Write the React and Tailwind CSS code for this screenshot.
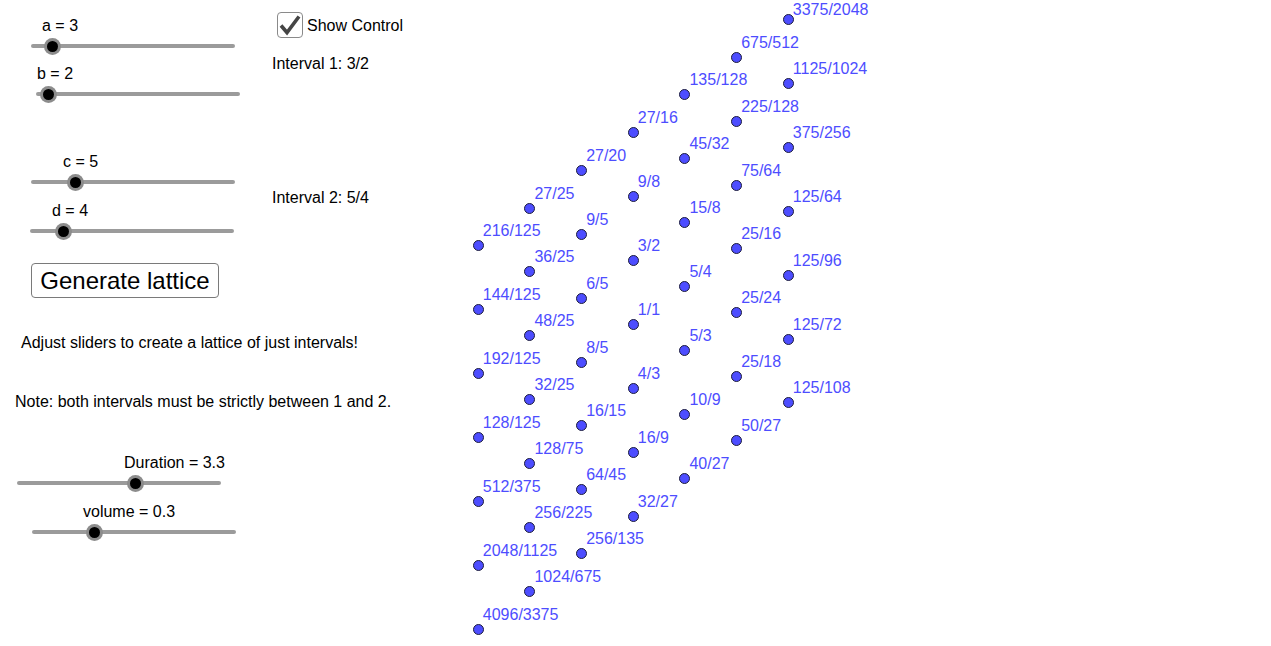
import React from "react";

// lattice columns go from i=-3 (left) to i=3 (right), rows j=-3 (top) to j=3
const columns = [
  ["216/125", "144/125", "192/125", "128/125", "512/375", "2048/1125", "4096/3375"],
  ["27/25", "36/25", "48/25", "32/25", "128/75", "256/225", "1024/675"],
  ["27/20", "9/5", "6/5", "8/5", "16/15", "64/45", "256/135"],
  ["27/16", "9/8", "3/2", "1/1", "4/3", "16/9", "32/27"],
  ["135/128", "45/32", "15/8", "5/4", "5/3", "10/9", "40/27"],
  ["675/512", "225/128", "75/64", "25/16", "25/24", "25/18", "50/27"],
  ["3375/2048", "1125/1024", "375/256", "125/64", "125/96", "125/72", "125/108"],
];

const CANVAS_LEFT = 450;

function Slider({ label, labelLeft, trackLeft, knob }) {
  return (
    <div className="flex flex-col">
      <div className="h-[18px] leading-[20px] whitespace-nowrap" style={{ marginLeft: labelLeft }}>
        {label}
      </div>
      <div className="relative mt-[4px] h-[16px] w-[204px]" style={{ marginLeft: trackLeft }}>
        <div className="absolute left-0 right-0 top-[6px] h-[4px] rounded-full bg-[#9b9b9b]" />
        <div
          className="absolute top-0 flex h-[17px] w-[17px] items-center justify-center rounded-full bg-[#8c8c8c]"
          style={{ left: knob - trackLeft - 8.5 }}
        >
          <div className="h-[11px] w-[11px] rounded-full bg-black" />
        </div>
      </div>
    </div>
  );
}

function CheckBox() {
  return (
    <div className="flex h-[26px] w-[26px] items-center justify-center rounded-[4px] border border-[#8a8a8a] bg-white">
      <svg width="24" height="24" viewBox="0 0 24 24">
        <path d="M3 12.5 L9 19.5 L21 3.5" fill="none" stroke="#454545" strokeWidth="3.6" />
      </svg>
    </div>
  );
}

function Lattice() {
  const nodes = [];
  columns.forEach((col, ci) => {
    const i = ci - 3;
    col.forEach((name, ri) => {
      const j = ri - 3;
      const x = 633.3 + 51.67 * i - CANVAS_LEFT;
      const y = 324.3 - 37.7 * i + 63.9 * j;
      nodes.push({ name, x, y });
    });
  });
  return (
    <div className="relative h-[646px] flex-1">
      {nodes.map((n) => (
        <React.Fragment key={n.name}>
          <div
            className="absolute h-[11px] w-[11px] rounded-full border border-[#1c1c3c] bg-[#4d4dff]"
            style={{ left: n.x - 5.5, top: n.y - 5.5 }}
          />
          <div
            className="absolute whitespace-nowrap text-[16px] leading-[18px] text-[#4d4dff]"
            style={{ left: n.x + 4.5, top: Math.max(1, n.y - 23.5) }}
          >
            {n.name}
          </div>
        </React.Fragment>
      ))}
    </div>
  );
}

export default function App() {
  return (
    <div className="flex h-[646px] w-[1271px] overflow-hidden bg-white font-['Liberation_Sans',Arial,sans-serif] text-[16px] text-black">
      <div className="flex w-[272px] shrink-0 flex-col">
        <div className="mt-[16px]">
          <Slider label="a = 3" labelLeft={42} trackLeft={31} knob={52.5} />
        </div>
        <div className="mt-[10px]">
          <Slider label="b = 2" labelLeft={37} trackLeft={36} knob={48} />
        </div>
        <div className="mt-[50px]">
          <Slider label="c = 5" labelLeft={63} trackLeft={31} knob={75} />
        </div>
        <div className="mt-[11px]">
          <Slider label="d = 4" labelLeft={52} trackLeft={30} knob={63} />
        </div>
        <button className="ml-[31px] mt-[24px] h-[35px] w-[188px] rounded-[4px] border border-[#7a7a7a] bg-white text-[24px] leading-[28px] text-black">
          Generate lattice
        </button>
        <div className="ml-[21px] mt-[35px] h-[18px] whitespace-nowrap leading-[20px]">
          Adjust sliders to create a lattice of just intervals!
        </div>
        <div className="ml-[15px] mt-[41px] h-[18px] whitespace-nowrap leading-[20px]">
          Note: both intervals must be strictly between 1 and 2.
        </div>
        <div className="mt-[43px]">
          <Slider label="Duration = 3.3" labelLeft={124} trackLeft={17} knob={135} />
        </div>
        <div className="mt-[11px]">
          <Slider label="volume = 0.3" labelLeft={83} trackLeft={32} knob={94.5} />
        </div>
      </div>

      <div className="flex w-[178px] shrink-0 flex-col">
        <div className="mt-[12px] flex h-[26px] items-center">
          <div className="ml-[5px]">
            <CheckBox />
          </div>
          <span className="ml-[4px] block h-[18px] leading-[20px] whitespace-nowrap">Show Control</span>
        </div>
        <div className="mt-[16px] h-[18px] whitespace-nowrap leading-[20px]">Interval 1: 3/2</div>
        <div className="mt-[116px] h-[18px] whitespace-nowrap leading-[20px]">Interval 2: 5/4</div>
      </div>

      <Lattice />
    </div>
  );
}
